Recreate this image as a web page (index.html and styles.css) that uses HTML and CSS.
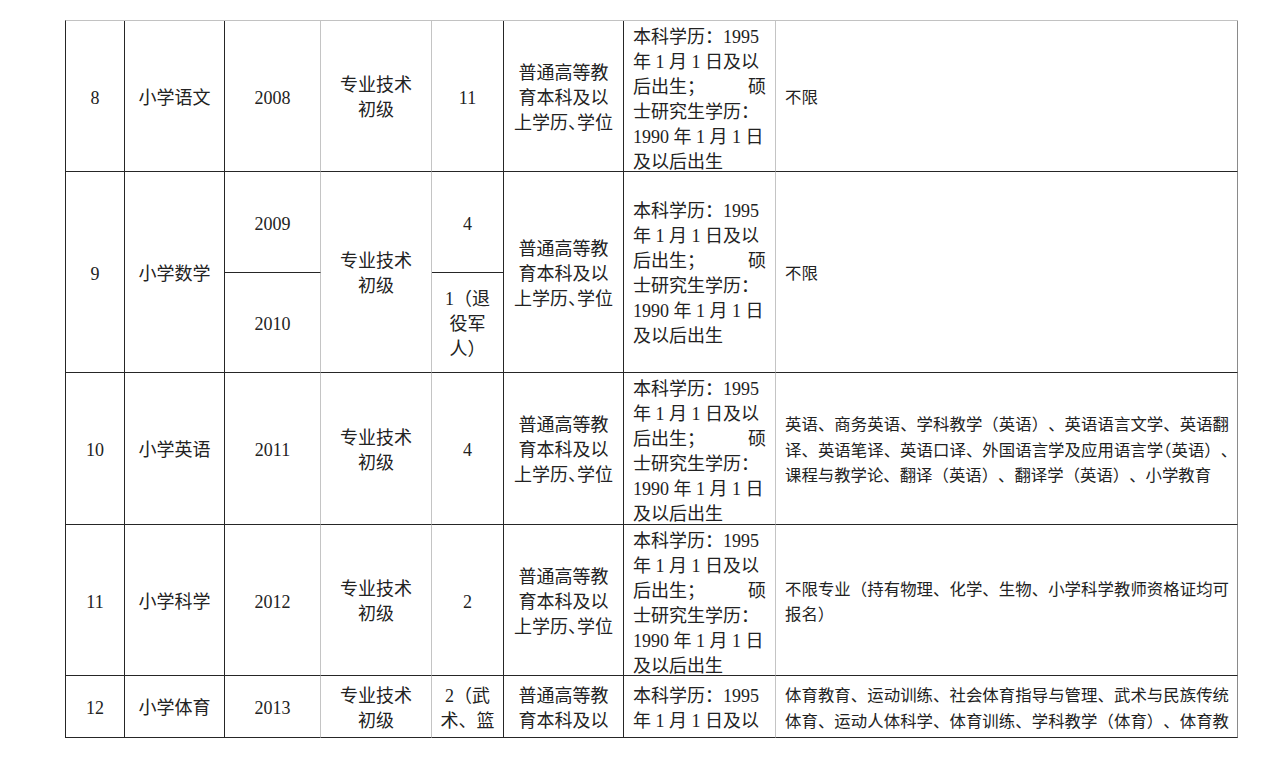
FILE: index.html
```html
<!DOCTYPE html>
<html lang="zh-CN">
<head>
<meta charset="utf-8">
<title>岗位表</title>
<link rel="stylesheet" href="styles.css">
</head>
<body>
<div class="sheet">
  <!-- row 8 -->
  <div class="c k1">8</div>
  <div class="c k2">小学语文</div>
  <div class="c k3">2008</div>
  <div class="c k4"><div>专业技术</div><div>初级</div></div>
  <div class="c k5">11</div>
  <div class="c k6"><div>普通高等教</div><div>育本科及以</div><div>上学历<span class="h">、</span>学位</div></div>
  <div class="c k7"><div>本科学历：1995</div><div>年 1 月 1 日及以</div><div class="split"><span>后出生；</span><span>硕</span></div><div>士研究生学历：</div><div>1990 年 1 月 1 日</div><div>及以后出生</div></div>
  <div class="c k8"><div>不限</div></div>

  <!-- row 9 -->
  <div class="c k1 tall">9</div>
  <div class="c k2 tall">小学数学</div>
  <div class="c k3">2009</div>
  <div class="c k4 tall"><div>专业技术</div><div>初级</div></div>
  <div class="c k5">4</div>
  <div class="c k6 tall"><div>普通高等教</div><div>育本科及以</div><div>上学历<span class="h">、</span>学位</div></div>
  <div class="c k7 tall"><div>本科学历：1995</div><div>年 1 月 1 日及以</div><div class="split"><span>后出生；</span><span>硕</span></div><div>士研究生学历：</div><div>1990 年 1 月 1 日</div><div>及以后出生</div></div>
  <div class="c k8 tall"><div>不限</div></div>
  <div class="c k3">2010</div>
  <div class="c k5"><div>1（退</div><div>役军</div><div>人）</div></div>

  <!-- row 10 -->
  <div class="c k1">10</div>
  <div class="c k2">小学英语</div>
  <div class="c k3">2011</div>
  <div class="c k4"><div>专业技术</div><div>初级</div></div>
  <div class="c k5">4</div>
  <div class="c k6"><div>普通高等教</div><div>育本科及以</div><div>上学历<span class="h">、</span>学位</div></div>
  <div class="c k7"><div>本科学历：1995</div><div>年 1 月 1 日及以</div><div class="split"><span>后出生；</span><span>硕</span></div><div>士研究生学历：</div><div>1990 年 1 月 1 日</div><div>及以后出生</div></div>
  <div class="c k8"><div class="jl">英语、商务英语、学科教学（英语）、英语语言文学、英语翻</div><div class="jl">译、英语笔译、英语口译、外国语言学及应用语言学<span class="h">（</span>英语）<span class="h">、</span></div><div>课程与教学论、翻译（英语）、翻译学（英语）、小学教育</div></div>

  <!-- row 11 -->
  <div class="c k1">11</div>
  <div class="c k2">小学科学</div>
  <div class="c k3">2012</div>
  <div class="c k4"><div>专业技术</div><div>初级</div></div>
  <div class="c k5">2</div>
  <div class="c k6"><div>普通高等教</div><div>育本科及以</div><div>上学历<span class="h">、</span>学位</div></div>
  <div class="c k7"><div>本科学历：1995</div><div>年 1 月 1 日及以</div><div class="split"><span>后出生；</span><span>硕</span></div><div>士研究生学历：</div><div>1990 年 1 月 1 日</div><div>及以后出生</div></div>
  <div class="c k8"><div class="jl">不限专业（持有物理、化学、生物、小学科学教师资格证均可</div><div>报名）</div></div>

  <!-- row 12 -->
  <div class="c k1">12</div>
  <div class="c k2">小学体育</div>
  <div class="c k3">2013</div>
  <div class="c k4"><div>专业技术</div><div>初级</div></div>
  <div class="c k5"><div>2（武</div><div>术、篮</div></div>
  <div class="c k6"><div>普通高等教</div><div>育本科及以</div></div>
  <div class="c k7"><div>本科学历：1995</div><div>年 1 月 1 日及以</div></div>
  <div class="c k8"><div class="jl">体育教育、运动训练、社会体育指导与管理、武术与民族传统</div><div class="jl">体育、运动人体科学、体育训练、学科教学（体育）、体育教</div></div>
</div>
</body>
</html>
```

FILE: styles.css
```css
html, body {
  margin: 0;
  padding: 0;
  background: #ffffff;
}

.sheet {
  display: grid;
  grid-template-columns: 59px 100px 96px 111px 72px 120px 152px 462px;
  grid-template-rows: 151px 101px 100px 152px 151px 62px;
  width: 1172px;
  margin: 20px 0 0 65px;
  border-top: 1px solid #c2c2c2;
  border-left: 1px solid #262626;
  font-family: "Liberation Serif", "Noto Sans CJK SC", serif;
  font-size: 18px;
  line-height: 25px;
  color: #222222;
  text-spacing-trim: space-all;
}

.c {
  box-sizing: border-box;
  border-right: 1px solid #262626;
  border-bottom: 1px solid #262626;
  display: flex;
  flex-direction: column;
  justify-content: safe center;
  align-items: center;
  text-align: center;
  overflow: hidden;
  padding: 4px 3px 0;
  white-space: nowrap;
}

.k3,
.k4,
.k7 {
  border-right-color: #c4c4c4;
}

.k7 {
  align-items: stretch;
  text-align: left;
  padding: 4px 9px 0;
}

.k8 {
  border-right-color: #8a8a8a;
  align-items: stretch;
  text-align: left;
  padding: 4px 8px 0 9px;
  font-size: 16.4px;
  line-height: 25.5px;
  white-space: normal;
}

.tall {
  grid-row: span 2;
}

.split {
  display: flex;
  justify-content: space-between;
}

.jl {
  text-align: justify;
  text-align-last: justify;
}

.h {
  font-feature-settings: "halt";
}
```
